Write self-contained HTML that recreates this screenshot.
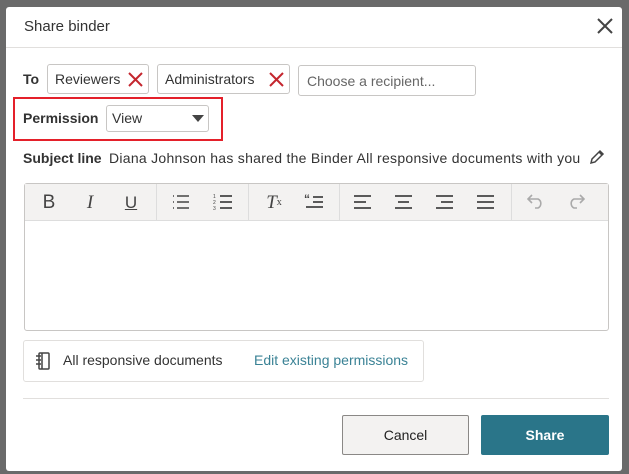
<!DOCTYPE html>
<html><head><style>
*{box-sizing:border-box;margin:0;padding:0}
body{width:629px;height:474px;background:#6a6a6a;font-family:"Liberation Sans",sans-serif;color:#333;position:relative;overflow:hidden}
.modal{position:absolute;left:6px;top:7px;width:616px;height:464px;background:#fff;border-radius:3px}
.abs{position:absolute}
.t{font-size:14px;white-space:nowrap}
.box{position:absolute;border:1px solid #c8c6c4;border-radius:3px;background:#fff}
.tb{position:absolute;top:0;height:37px;display:flex;align-items:center;justify-content:center;width:40px;color:#444}
.sep{position:absolute;top:0;width:1px;height:37px;background:#ddd}
</style></head><body>
<div class="modal">
 <div class="abs t" style="left:18px;top:11px;font-size:15px">Share binder</div>
 <svg class="abs" style="left:591px;top:11px" width="16" height="16"><path d="M1 1L15 15M15 1L1 15" stroke="#444" stroke-width="2"/></svg>
 <div class="abs" style="left:0;top:40px;width:616px;height:1px;background:#e1dfdd"></div>

 <div class="abs t" style="left:17px;top:64px;font-weight:bold;color:#333">To</div>
 <div class="box" style="left:41px;top:57px;width:102px;height:30px"><span class="abs t" style="left:7px;top:6px">Reviewers</span>
  <svg class="abs" style="left:80px;top:7px" width="15" height="15"><path d="M1 1L14 14M14 1L1 14" stroke="#c4262e" stroke-width="2"/></svg></div>
 <div class="box" style="left:151px;top:57px;width:133px;height:30px"><span class="abs t" style="left:7px;top:6px">Administrators</span>
  <svg class="abs" style="left:111px;top:7px" width="15" height="15"><path d="M1 1L14 14M14 1L1 14" stroke="#c4262e" stroke-width="2"/></svg></div>
 <div class="box" style="left:292px;top:58px;width:178px;height:31px"><span class="abs t" style="left:8px;top:7px;color:#666">Choose a recipient...</span></div>

 <div class="abs" style="left:7px;top:90px;width:210px;height:44px;border:2px solid #e4202a"></div>
 <div class="abs t" style="left:17px;top:103px;font-weight:bold">Permission</div>
 <div class="box" style="left:100px;top:98px;width:103px;height:27px"><span class="abs t" style="left:5px;top:4px">View</span>
  <svg class="abs" style="left:85px;top:9px" width="12" height="8"><path d="M0 0H12L6 7Z" fill="#444"/></svg></div>

 <div class="abs t" style="left:17px;top:143px;font-weight:bold">Subject line</div>
 <div class="abs t" style="left:103px;top:143px;letter-spacing:0.28px">Diana Johnson has shared the Binder All responsive documents with you</div>
 <svg class="abs" style="left:583px;top:142px" width="16" height="16"><path d="M2 14L3 10L11 2L14 5L6 13Z M10 3L13 6" stroke="#444" stroke-width="1.5" fill="none"/></svg>

 <div class="box" style="left:18px;top:176px;width:585px;height:148px;border-color:#c8c6c4">
  <div class="abs" style="left:0;top:0;width:583px;height:37px;background:#f3f2f1;border-bottom:1px solid #ddd"></div>
  <div class="tb" style="left:4px;font-size:19px">B</div>
  <div class="tb" style="left:45px;font-size:19px;font-style:italic;font-family:'Liberation Serif',serif">I</div>
  <div class="tb" style="left:86px;font-size:17px;text-decoration:underline">U</div>
  <div class="sep" style="left:131px"></div>
  <svg class="abs" style="left:147px;top:10px" width="18" height="16"><g stroke="#444" stroke-width="1.5"><path d="M5 2H17M5 8H17M5 14H17M1 2H2M1 8H2M1 14H2"/></g></svg>
  <svg class="abs" style="left:188px;top:9px" width="20" height="18"><g stroke="#444" stroke-width="1.8"><path d="M7 3H19M7 9H19M7 15H19"/></g><text x="0" y="5" font-size="5" fill="#444">1</text><text x="0" y="11" font-size="5" fill="#444">2</text><text x="0" y="17" font-size="5" fill="#444">3</text></svg>
  <div class="sep" style="left:223px"></div>
  <div class="tb" style="left:229px;font-size:19px;font-style:italic;font-family:'Liberation Serif',serif">T<span style="font-size:10px;font-style:normal">x</span></div>
  <svg class="abs" style="left:279px;top:10px" width="20" height="16"><text x="0" y="9" font-size="12" font-weight="bold" fill="#444">“</text><g stroke="#444" stroke-width="1.8"><path d="M9 3H19M9 8H19M2 13H19"/></g></svg>
  <div class="sep" style="left:314px"></div>
  <svg class="abs" style="left:329px;top:10px" width="18" height="16"><g stroke="#444" stroke-width="1.8"><path d="M0 2H17M0 8H12M0 14H17"/></g></svg>
  <svg class="abs" style="left:370px;top:10px" width="18" height="16"><g stroke="#444" stroke-width="1.8"><path d="M0 2H17M3 8H14M0 14H17"/></g></svg>
  <svg class="abs" style="left:411px;top:10px" width="18" height="16"><g stroke="#444" stroke-width="1.8"><path d="M0 2H17M5 8H17M0 14H17"/></g></svg>
  <svg class="abs" style="left:452px;top:10px" width="18" height="16"><g stroke="#444" stroke-width="1.8"><path d="M0 2H17M0 8H17M0 14H17"/></g></svg>
  <div class="sep" style="left:486px"></div>
  <svg class="abs" style="left:502px;top:9px" width="18" height="16"><path d="M5 2L1 6L5 10M1 6H11A5 5 0 0 1 11 15H8" stroke="#aaa" stroke-width="1.6" fill="none"/></svg>
  <svg class="abs" style="left:542px;top:9px" width="18" height="16"><path d="M13 2L17 6L13 10M17 6H7A5 5 0 0 0 7 15H10" stroke="#aaa" stroke-width="1.6" fill="none"/></svg>
 </div>

 <div class="box" style="left:17px;top:333px;width:401px;height:42px;border-color:#e1dfdd">
  <svg class="abs" style="left:11px;top:11px" width="16" height="19"><g stroke="#444" stroke-width="1.5" fill="none"><rect x="4" y="1" width="10" height="16" rx="1"/><path d="M1 4H6M1 8H6M1 12H6M7 1V17"/></g></svg>
  <span class="abs t" style="left:39px;top:11px;color:#333">All responsive documents</span>
  <span class="abs t" style="left:230px;top:11px;color:#3a8295">Edit existing permissions</span>
 </div>
 <div class="abs" style="left:17px;top:391px;width:586px;height:1px;background:#e1dfdd"></div>

 <div class="abs" style="left:336px;top:408px;width:127px;height:40px;background:#f3f2f1;border:1px solid #8a8886;border-radius:2px;text-align:center;line-height:38px;font-size:14px;color:#222">Cancel</div>
 <div class="abs" style="left:475px;top:408px;width:128px;height:40px;background:#2a7589;border-radius:2px;text-align:center;line-height:40px;font-size:14px;font-weight:bold;color:#fff">Share</div>
</div>
</body></html>
